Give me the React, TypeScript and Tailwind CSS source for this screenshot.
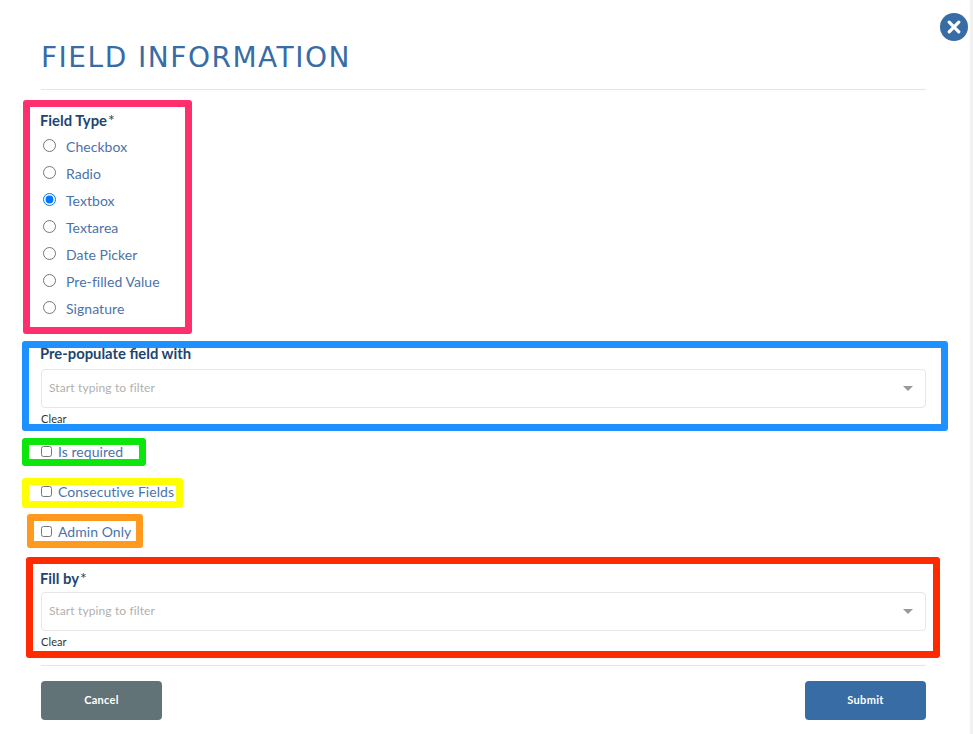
const fieldTypes = ["Checkbox", "Radio", "Textbox", "Textarea", "Date Picker", "Pre-filled Value", "Signature"];

function Label({ children }: { children: React.ReactNode }) {
  return <div className="-ml-px h-5 text-[14.8px] leading-[19px] font-bold text-[#1d4570]">{children}</div>;
}

function Required() {
  return <span className="ml-px text-[16px] font-normal">*</span>;
}

function FilterSelect() {
  return (
    <div className="flex h-[39px] items-center justify-between rounded-[4px] border border-[#e6e6e6] bg-white pl-[7px] pr-[12px]">
      <input
        placeholder="Start typing to filter"
        className="w-[300px] bg-transparent pb-[2px] text-[12px] tracking-[0.12px] text-[#999] outline-none placeholder:text-[#b0b0b0]"
      />
      <svg width="10" height="5" viewBox="0 0 10 5" className="fill-[#999]">
        <path d="M0 0h10L5 5z" />
      </svg>
    </div>
  );
}

function ClearLink() {
  return <div className="mt-1 h-[14px] text-[11px] leading-[14px] tracking-[0.1px] text-[#333]">Clear</div>;
}

function CheckRow({ label, className }: { label: string; className: string }) {
  return (
    <label className={`flex h-5 items-center gap-[6px] text-[14px] leading-5 tracking-[0.05px] text-[#4a73aa] ${className}`}>
      <input type="checkbox" className="m-0 mb-[2px] h-[11px] w-[11px]" />
      {label}
    </label>
  );
}

export default function App() {
  return (
    <div className="relative h-[734px] w-full overflow-hidden border-r-[3px] border-[#f1f1f1] bg-white font-['Lato',sans-serif]">
      <button className="absolute left-[940px] top-[13px] flex h-[28px] w-[28px] items-center justify-center rounded-full bg-[#386ca5]">
        <svg width="14" height="14" viewBox="0 0 14 14" className="stroke-white" strokeWidth="3.2" strokeLinecap="round">
          <path d="M2.2 2.2l9.6 9.6M11.8 2.2l-9.6 9.6" />
        </svg>
      </button>

      <div className="pl-[41px] pr-[44px]">
        <div className="border-b border-[#e5e5e5] pb-[14px] pt-[41px]">
          <h1 className="text-[28px] font-normal leading-[34px] tracking-[1.5px] text-[#386ca5] font-['DejaVu_Sans',sans-serif]">
            FIELD INFORMATION
          </h1>
        </div>

        <div className="mt-5">
          <Label>
            Field Type<Required />
          </Label>
          <div className="mt-[3px]">
            {fieldTypes.map((t) => (
              <label key={t} className="flex h-[27px] items-center text-[14px] tracking-[0.05px] text-[#4a73aa]">
                <input
                  type="radio"
                  name="fieldType"
                  defaultChecked={t === "Textbox"}
                  className="m-0 mb-[2px] ml-[2px] h-[13px] w-[13px]"
                />
                <span className="ml-[10px]">{t}</span>
              </label>
            ))}
          </div>
        </div>

        <div className="mt-[22px]">
          <Label>Pre-populate field with</Label>
          <div className="mt-[5px]">
            <FilterSelect />
          </div>
          <ClearLink />
        </div>

        <CheckRow label="Is required" className="mt-4" />
        <CheckRow label="Consecutive Fields" className="mt-5" />
        <CheckRow label="Admin Only" className="mt-5" />

        <div className="mt-[26px]">
          <Label>
            Fill by<Required />
          </Label>
          <div className="mt-1">
            <FilterSelect />
          </div>
          <ClearLink />
        </div>

        <div className="mt-4 flex justify-between border-t border-[#e5e5e5] pt-[15px]">
          <button className="h-[39px] w-[121px] rounded-[4px] bg-[#627377] text-[11px] font-bold tracking-[0.3px] text-white">
            Cancel
          </button>
          <button className="h-[39px] w-[121px] rounded-[4px] bg-[#386ca5] text-[11px] font-bold tracking-[0.3px] text-white">
            Submit
          </button>
        </div>
      </div>

      {/* review markup drawn over the form */}
      <div className="pointer-events-none absolute left-[23px] top-[100px] h-[234px] w-[169px] rounded-[3px] border-[7px] border-[#ff2f6e]" />
      <div className="pointer-events-none absolute left-[22px] top-[341px] h-[90px] w-[926px] rounded-[3px] border-[7px] border-[#1e90ff]" />
      <div className="pointer-events-none absolute left-[22px] top-[438px] h-[28px] w-[124px] rounded-[3px] border-[7px] border-[#0de60d]" />
      <div className="pointer-events-none absolute left-[22px] top-[478px] h-[30px] w-[161px] rounded-[3px] border-[7px] border-[#ffff00]" />
      <div className="pointer-events-none absolute left-[27px] top-[514px] h-[34px] w-[116px] rounded-[3px] border-[7px] border-[#ff9a1f]" />
      <div className="pointer-events-none absolute left-[26px] top-[557px] h-[101px] w-[914px] rounded-[3px] border-[7px] border-[#ff2a00]" />
    </div>
  );
}
